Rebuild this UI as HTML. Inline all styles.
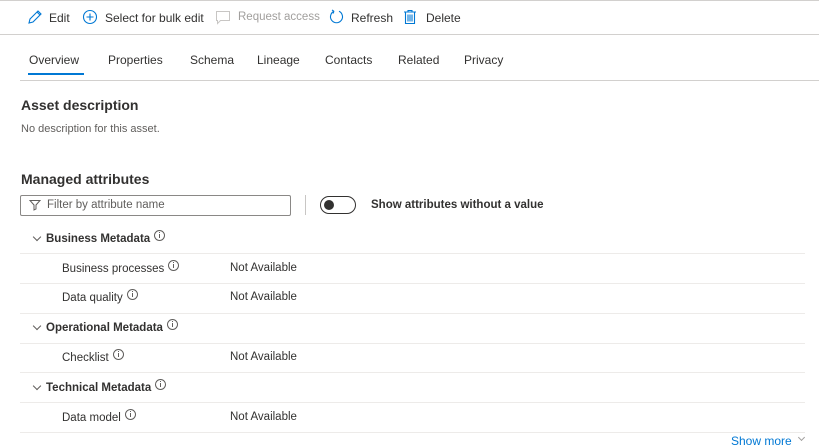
<!DOCTYPE html>
<html><head><style>
body{margin:0;width:819px;height:448px;background:#fff;font-family:"Liberation Sans",sans-serif;color:#323130;position:relative;overflow:hidden}
.a{position:absolute;white-space:nowrap}
.t{font-size:12px}
.ln{position:absolute;height:1px;background:#edebe9}
svg{position:absolute}
.i{display:inline-block;width:9px;height:9px;border:1px solid #605e5c;border-radius:50%;margin-left:4px;vertical-align:1px;position:relative}
.i:after{content:"";position:absolute;left:4px;top:3px;width:1px;height:4px;background:#605e5c}
.i:before{content:"";position:absolute;left:4px;top:1px;width:1px;height:1px;background:#605e5c}
.h{font-weight:bold;font-size:11.5px;color:#323130}
.chev{position:absolute;width:5px;height:5px;border-right:1px solid #605e5c;border-bottom:1px solid #605e5c;transform:rotate(45deg)}
</style></head><body>
<div class="ln" style="left:0;top:0;width:819px;background:#d2d0ce"></div>
<svg style="left:27px;top:9px" width="16" height="16" viewBox="0 0 16 16"><path d="M2 14l1-4 8-8 3 3-8 8z M10 3l3 3" fill="none" stroke="#0078d4" stroke-width="1.1"/></svg>
<div class="a t" style="left:49px;top:11px">Edit</div>
<svg style="left:82px;top:9px" width="16" height="16" viewBox="0 0 16 16"><circle cx="8" cy="8" r="6.5" fill="none" stroke="#0078d4" stroke-width="1.1"/><path d="M8 4.5v7M4.5 8h7" stroke="#0078d4" stroke-width="1.1"/></svg>
<div class="a t" style="left:105px;top:11px">Select for bulk edit</div>
<svg style="left:215px;top:10px" width="16" height="16" viewBox="0 0 16 16"><path d="M1.5 1.5h13v9h-9l-3 3v-3h-1z" fill="none" stroke="#c8c6c4"/></svg>
<div class="a t" style="left:238px;top:11px;color:#a19f9d;font-size:11.5px">Request access</div>
<svg style="left:329px;top:9px" width="16" height="16" viewBox="0 0 16 16"><path d="M5 2.3A6 6 0 1 0 10 2.3" fill="none" stroke="#0078d4" stroke-width="1.1"/><path d="M5 2.3L3 1M5 2.3L4 4.5" fill="none" stroke="#0078d4" stroke-width="1.1"/></svg>
<div class="a t" style="left:351px;top:11px">Refresh</div>
<svg style="left:403px;top:9px" width="14" height="16" viewBox="0 0 14 16"><path d="M1 3h12M5 3V1.5h4V3M2.5 3v11.5h9V3M5 5.5v7M7 5.5v7M9 5.5v7" fill="none" stroke="#0078d4" stroke-width="1.1"/></svg>
<div class="a t" style="left:426px;top:11px">Delete</div>
<div class="ln" style="left:0;top:34px;width:819px;background:#d2d0ce"></div>
<div class="a t" style="left:29px;top:53px">Overview</div>
<div class="a t" style="left:108px;top:53px">Properties</div>
<div class="a t" style="left:190px;top:53px">Schema</div>
<div class="a t" style="left:257px;top:53px">Lineage</div>
<div class="a t" style="left:325px;top:53px">Contacts</div>
<div class="a t" style="left:398px;top:53px">Related</div>
<div class="a t" style="left:464px;top:53px">Privacy</div>
<div class="ln" style="left:28px;top:73px;width:56px;height:2px;background:#0078d4"></div>
<div class="ln" style="left:20px;top:80px;width:799px;background:#d2d0ce"></div>
<div class="a" style="left:21px;top:97px;font-size:14px;font-weight:bold">Asset description</div>
<div class="a t" style="left:21px;top:123px;font-size:11px;color:#605e5c">No description for this asset.</div>
<div class="a" style="left:21px;top:171px;font-size:14px;font-weight:bold">Managed attributes</div>
<div class="a" style="left:20px;top:195px;width:269px;height:19px;border:1px solid #8a8886;border-radius:2px"></div>
<svg style="left:29px;top:199px" width="12" height="12" viewBox="0 0 12 12"><path d="M1 1.5h10l-4 4.5v4l-2 1v-5z" fill="none" stroke="#605e5c"/></svg>
<div class="a t" style="left:47px;top:199px;font-size:11.5px;color:#605e5c">Filter by attribute name</div>
<div class="ln" style="left:305px;top:195px;width:1px;height:20px;background:#c8c6c4"></div>
<div class="a" style="left:320px;top:196px;width:34px;height:16px;border:1px solid #323130;border-radius:9px"></div>
<div class="a" style="left:324px;top:200px;width:10px;height:10px;border-radius:5px;background:#323130"></div>
<div class="a t" style="left:371px;top:199px;font-weight:bold;font-size:11.5px">Show attributes without a value</div>

<div class="chev" style="left:34px;top:234px"></div>
<div class="a h" style="left:46px;top:230px">Business Metadata<span class="i"></span></div>
<div class="ln" style="left:20px;top:253px;width:785px"></div>
<div class="a t" style="left:62px;top:260px;font-size:11.5px">Business processes<span class="i"></span></div>
<div class="a t" style="left:230px;top:262px;font-size:11.5px">Not Available</div>
<div class="ln" style="left:20px;top:283px;width:785px"></div>
<div class="a t" style="left:62px;top:289px;font-size:11.5px">Data quality<span class="i"></span></div>
<div class="a t" style="left:230px;top:291px;font-size:11.5px">Not Available</div>
<div class="ln" style="left:20px;top:313px;width:785px"></div>
<div class="chev" style="left:34px;top:323px"></div>
<div class="a h" style="left:46px;top:319px">Operational Metadata<span class="i"></span></div>
<div class="ln" style="left:20px;top:343px;width:785px"></div>
<div class="a t" style="left:62px;top:349px;font-size:11.5px">Checklist<span class="i"></span></div>
<div class="a t" style="left:230px;top:351px;font-size:11.5px">Not Available</div>
<div class="ln" style="left:20px;top:372px;width:785px"></div>
<div class="chev" style="left:34px;top:383px"></div>
<div class="a h" style="left:46px;top:379px">Technical Metadata<span class="i"></span></div>
<div class="ln" style="left:20px;top:402px;width:785px"></div>
<div class="a t" style="left:62px;top:409px;font-size:11.5px">Data model<span class="i"></span></div>
<div class="a t" style="left:230px;top:411px;font-size:11.5px">Not Available</div>
<div class="ln" style="left:20px;top:432px;width:785px"></div>
<div class="a t" style="left:731px;top:434px;color:#0078d4">Show more</div>
<div class="chev" style="left:799px;top:435px;width:4px;height:4px;border-color:#a19f9d"></div>
</body></html>
